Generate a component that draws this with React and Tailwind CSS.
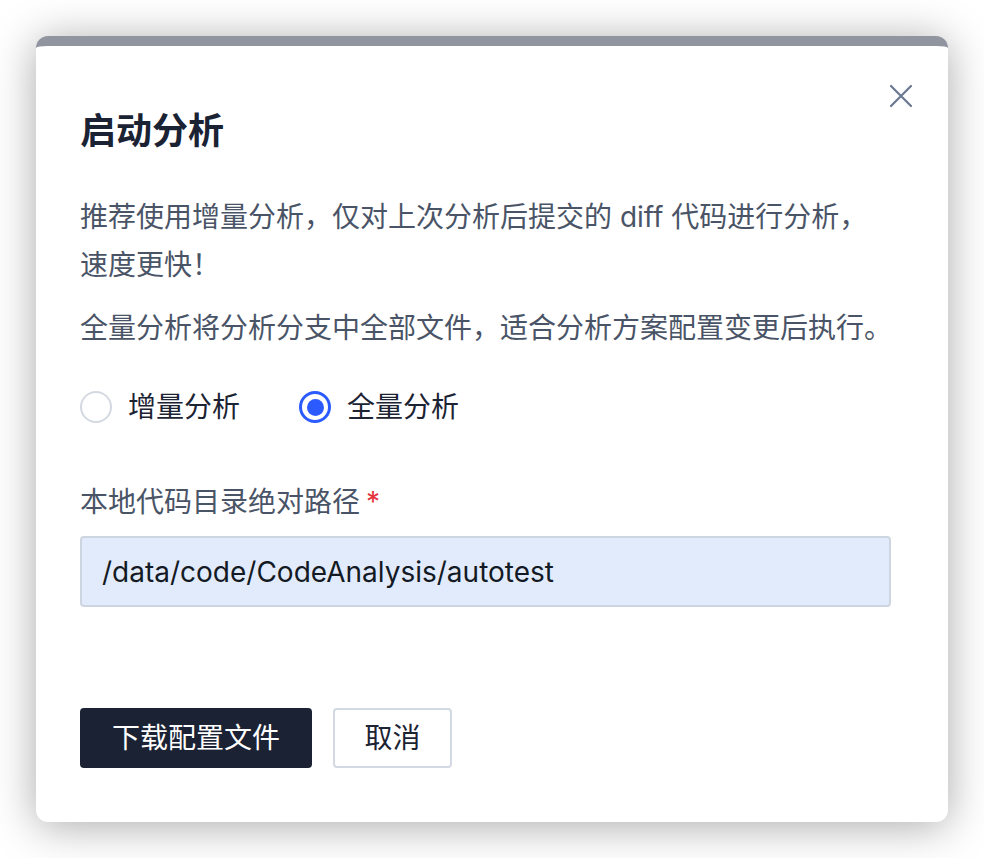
import { useState } from "react";

const Radio = ({ checked, label, onClick }) => {
  return (
    <button type="button" onClick={onClick} className="flex items-center gap-[16px] h-[48px]">
      {checked ? (
        <span className="w-[32px] h-[32px] rounded-full border-[3px] border-[#2b5bff] flex items-center justify-center">
          <span className="w-[17px] h-[17px] rounded-full bg-[#2b5bff]" />
        </span>
      ) : (
        <span className="w-[32px] h-[32px] rounded-full border-2 border-[#d4d9e1] bg-white" />
      )}
      <span className="text-[28px] leading-[48px] text-[#1c2333]">{label}</span>
    </button>
  );
};

const App = () => {
  const [mode, setMode] = useState("full");
  const [path, setPath] = useState("/data/code/CodeAnalysis/autotest");

  return (
    <div
      className="min-h-[858px] bg-white pt-[36px] px-[36px]"
      style={{ fontFamily: 'Inter, "Noto Sans CJK SC", sans-serif' }}
    >
      <div className="relative w-[912px] h-[786px] bg-white rounded-[12px] border-t-[10px] border-[#91959f] shadow-[0_4px_44px_rgba(0,0,0,0.34)] px-[44px] pt-[61px]">
        <button type="button" className="absolute right-[35px] top-[38px] w-[24px] h-[24px] text-[#6b7890]">
          <svg viewBox="0 0 24 24" width="24" height="24" fill="none" stroke="currentColor" strokeWidth="2.2" strokeLinecap="round">
            <path d="M2 2L22 22M22 2L2 22" />
          </svg>
        </button>

        <h1 className="text-[36px] leading-[48px] font-bold text-[#1a2233]">启动分析</h1>

        <p className="mt-[38px] text-[28px] leading-[48px] text-[#4a5467]">
          推荐使用增量分析，仅对上次分析后提交的 diff 代码进行分析，
          <br />
          速度更快！
        </p>
        <p className="mt-[15px] text-[28px] leading-[48px] text-[#4a5467] whitespace-nowrap">
          全量分析将分析分支中全部文件，适合分析方案配置变更后执行。
        </p>

        <div className="mt-[31px] flex items-center gap-[59px]">
          <Radio checked={mode === "inc"} label="增量分析" onClick={() => setMode("inc")} />
          <Radio checked={mode === "full"} label="全量分析" onClick={() => setMode("full")} />
        </div>

        <div className="mt-[47px] flex items-center text-[28px] leading-[48px] text-[#4a5467]">
          本地代码目录绝对路径
          <span className="ml-[6px] text-[#e5323c]">*</span>
        </div>

        <input
          value={path}
          onChange={(e) => setPath(e.target.value)}
          className="mt-[10px] block w-[811px] h-[71px] rounded-[4px] border-2 border-[#cdd5e0] bg-[#e2ebfc] px-[20px] text-[28px] text-[#141a24] outline-none"
        />

        <div className="mt-[101px] flex gap-[21px]">
          <button type="button" className="h-[60px] w-[232px] rounded-[4px] bg-[#1b2233] text-white text-[28px]">
            下载配置文件
          </button>
          <button type="button" className="h-[60px] w-[119px] rounded-[4px] border-2 border-[#d3d9e2] bg-white text-[#1c2333] text-[28px]">
            取消
          </button>
        </div>
      </div>
    </div>
  );
};

export default App;
